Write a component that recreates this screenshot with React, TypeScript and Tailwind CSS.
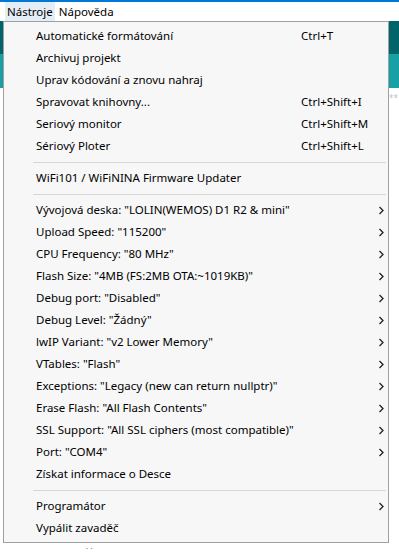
type Item =
  | { kind: "item"; label: string; shortcut?: string; submenu?: boolean }
  | { kind: "sep" };

const ITEMS: Item[] = [
  { kind: "item", label: "Automatické formátování", shortcut: "Ctrl+T" },
  { kind: "item", label: "Archivuj projekt" },
  { kind: "item", label: "Uprav kódování a znovu nahraj" },
  { kind: "item", label: "Spravovat knihovny...", shortcut: "Ctrl+Shift+I" },
  { kind: "item", label: "Seriový monitor", shortcut: "Ctrl+Shift+M" },
  { kind: "item", label: "Sériový Ploter", shortcut: "Ctrl+Shift+L" },
  { kind: "sep" },
  { kind: "item", label: "WiFi101 / WiFiNINA Firmware Updater" },
  { kind: "sep" },
  { kind: "item", label: 'Vývojová deska: "LOLIN(WEMOS) D1 R2 & mini"', submenu: true },
  { kind: "item", label: 'Upload Speed: "115200"', submenu: true },
  { kind: "item", label: 'CPU Frequency: "80 MHz"', submenu: true },
  { kind: "item", label: 'Flash Size: "4MB (FS:2MB OTA:~1019KB)"', submenu: true },
  { kind: "item", label: 'Debug port: "Disabled"', submenu: true },
  { kind: "item", label: 'Debug Level: "Žádný"', submenu: true },
  { kind: "item", label: 'lwIP Variant: "v2 Lower Memory"', submenu: true },
  { kind: "item", label: 'VTables: "Flash"', submenu: true },
  { kind: "item", label: 'Exceptions: "Legacy (new can return nullptr)"', submenu: true },
  { kind: "item", label: 'Erase Flash: "All Flash Contents"', submenu: true },
  { kind: "item", label: 'SSL Support: "All SSL ciphers (most compatible)"', submenu: true },
  { kind: "item", label: 'Port: "COM4"', submenu: true },
  { kind: "item", label: "Získat informace o Desce" },
  { kind: "sep" },
  { kind: "item", label: "Programátor", submenu: true },
  { kind: "item", label: "Vypálit zavaděč" },
];

const Chevron = () => (
  <svg width="6" height="9" viewBox="0 0 6 9" className="block">
    <polyline points="1.5,1 5,4.5 1.5,8" fill="none" stroke="#222" strokeWidth="1.3" />
  </svg>
);

export default function App() {
  return (
    <div
      className="w-[399px] h-[556px] bg-white overflow-hidden text-[11.5px] text-black"
      style={{ fontFamily: '"Noto Sans", "Open Sans", sans-serif' }}
    >
      <div className="h-[2px] bg-[#0078d7]" />
      <div className="h-[19px] flex items-center pl-[5px]">
        <div className="h-full px-[2px] flex items-center bg-[#e5eef7]">Nástroje</div>
        <div className="h-full px-[4px] flex items-center">Nápověda</div>
      </div>
      <div className="flex">
        <div className="w-[3px] flex flex-col">
          <div className="h-[33px] bg-[#006468]" />
          <div className="h-[34px] bg-[#17a1a5]" />
        </div>
        <div className="w-[386px] border border-[#a0a0a0] bg-[#f7f7f7] py-[3px]">
          {ITEMS.map((it, i) =>
            it.kind === "sep" ? (
              <div key={i} className="h-[10px] flex items-center pl-[29px] pr-[2px]">
                <div className="h-px w-full bg-[#d7d7d7]" />
              </div>
            ) : (
              <div
                key={i}
                className="h-[22px] grid grid-cols-[265px_1fr_auto] items-center pl-[32px] pr-[4px] whitespace-nowrap"
              >
                <span>{it.label}</span>
                <span>{it.shortcut}</span>
                <span className="w-[6px]">{it.submenu && <Chevron />}</span>
              </div>
            )
          )}
        </div>
        <div className="flex-1 flex flex-col">
          <div className="h-[33px] bg-[#006468]" />
          <div className="h-[34px] bg-[#17a1a5]" />
          <div className="h-[6px]" />
          <div className="text-[8px] text-[#b8c4cc] leading-none">**</div>
        </div>
      </div>
      <div className="pl-[86px] pt-[2px] text-[8px] text-[#777] leading-none">· ·</div>
    </div>
  );
}
